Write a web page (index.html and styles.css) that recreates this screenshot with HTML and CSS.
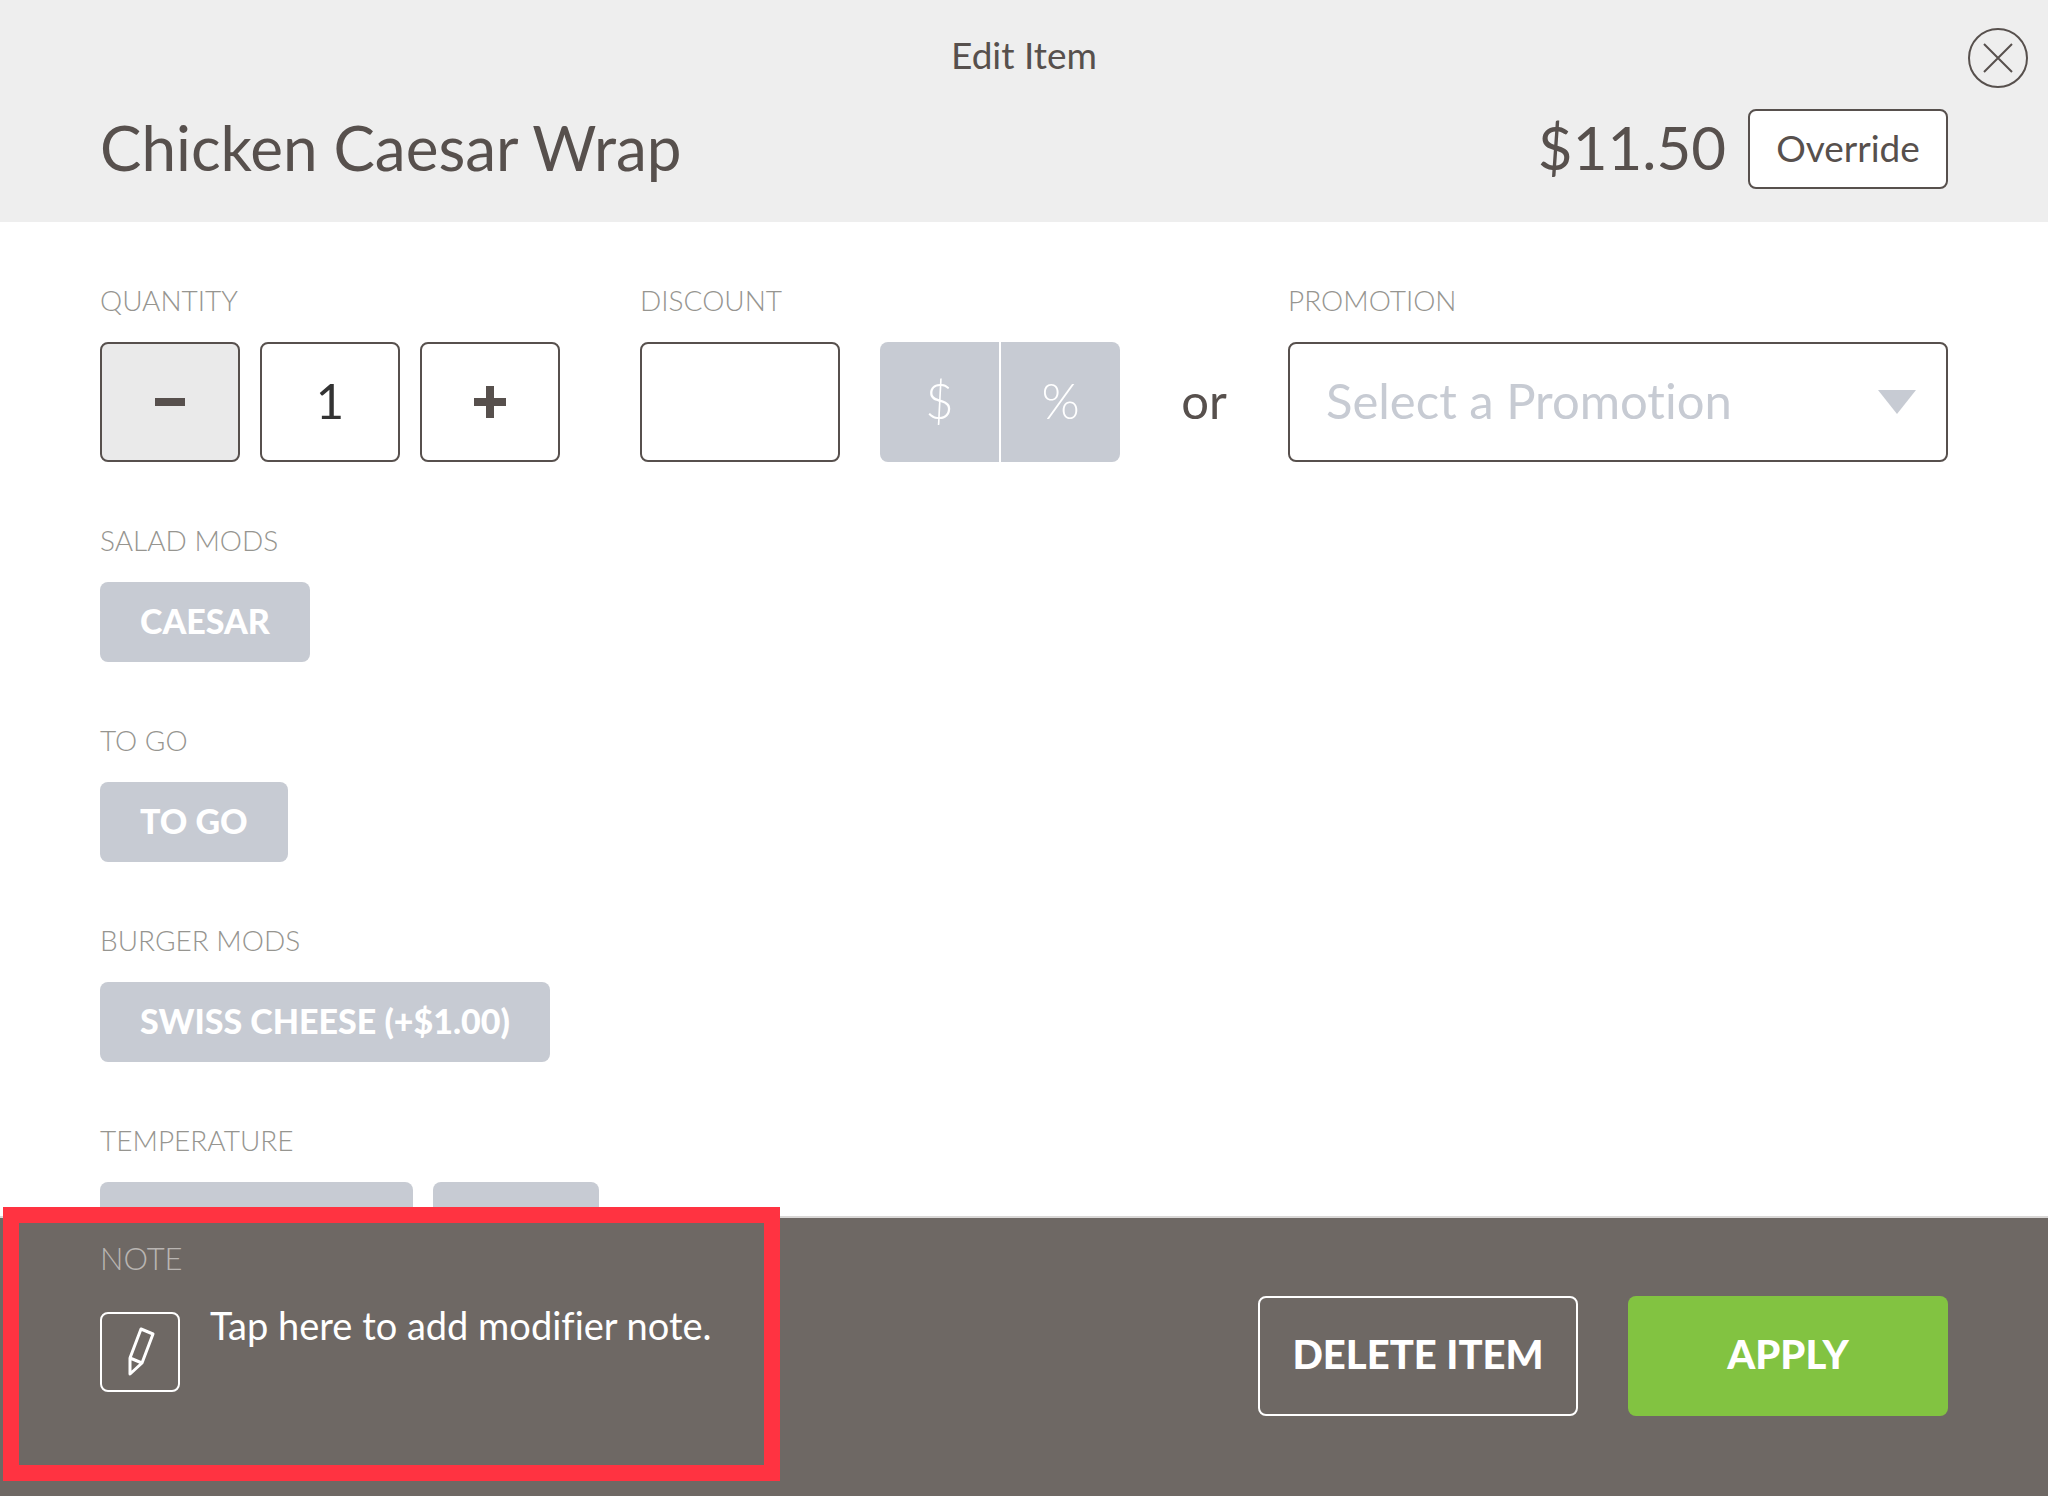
FILE: index.html
```html
<!DOCTYPE html>
<html lang="en">
<head>
    <meta charset="UTF-8">
    <meta name="viewport" content="width=device-width, initial-scale=1.0">
    <title>Edit Item</title>
    <link rel="stylesheet" href="styles.css">
</head>
<body>
    <header class="header">
        <h1 class="screen-title">Edit Item</h1>
        <button type="button" class="close" aria-label="Close">
            <svg viewBox="0 0 60 60" width="60" height="60">
                <circle cx="30" cy="30" r="29"/>
                <path d="M16 16L44 44M44 16L16 44"/>
            </svg>
        </button>
        <div class="item-row">
            <h2 class="item-name">Chicken Caesar Wrap</h2>
            <span class="price">$11.50</span>
            <button type="button" class="override">Override</button>
        </div>
    </header>

    <main class="content">
        <div class="fields">
            <div class="field">
                <label class="label" for="quantity">QUANTITY</label>
                <div class="stepper">
                    <button type="button" class="step step-off" aria-label="Decrease">
                        <svg viewBox="0 0 32 32" width="32" height="32"><path d="M1 16H31"/></svg>
                    </button>
                    <input type="text" id="quantity" class="box quantity" value="1">
                    <button type="button" class="step" aria-label="Increase">
                        <svg viewBox="0 0 32 32" width="32" height="32"><path d="M0 16H32M16 0V32"/></svg>
                    </button>
                </div>
            </div>

            <div class="field discount">
                <label class="label" for="discount">DISCOUNT</label>
                <div class="discount-row">
                    <input type="text" id="discount" class="box discount-input">
                    <div class="units">
                        <button type="button" class="unit">$</button>
                        <button type="button" class="unit">%</button>
                    </div>
                </div>
            </div>

            <span class="or">or</span>

            <div class="field promotion">
                <label class="label" for="promotion">PROMOTION</label>
                <div class="select-wrap">
                    <select id="promotion" class="box">
                        <option>Select a Promotion</option>
                    </select>
                    <svg class="caret" viewBox="0 0 38 24" width="38" height="24"><path d="M0 0H38L19 24Z"/></svg>
                </div>
            </div>
        </div>

        <section class="mods">
            <h3 class="label">SALAD MODS</h3>
            <div class="mod-list">
                <button type="button" class="mod">CAESAR</button>
            </div>
        </section>

        <section class="mods">
            <h3 class="label">TO GO</h3>
            <div class="mod-list">
                <button type="button" class="mod">TO GO</button>
            </div>
        </section>

        <section class="mods">
            <h3 class="label">BURGER MODS</h3>
            <div class="mod-list">
                <button type="button" class="mod">SWISS CHEESE (+$1.00)</button>
            </div>
        </section>

        <section class="mods">
            <h3 class="label">TEMPERATURE</h3>
            <div class="mod-list">
                <button type="button" class="mod mod-wide" aria-label="Temperature option 1"></button>
                <button type="button" class="mod mod-narrow" aria-label="Temperature option 2"></button>
            </div>
        </section>
    </main>

    <footer class="footer">
        <div class="note">
            <h3 class="note-label">NOTE</h3>
            <div class="note-row">
                <button type="button" class="note-edit" aria-label="Edit note">
                    <svg viewBox="0 0 80 80" width="80" height="80">
                        <path d="M41 17L53 22L42 51L30 46ZM30 46L30 62L42 51"/>
                    </svg>
                </button>
                <p class="note-text">Tap here to add modifier note.</p>
            </div>
        </div>
        <div class="actions">
            <button type="button" class="action delete">DELETE ITEM</button>
            <button type="button" class="action apply">APPLY</button>
        </div>
        <div class="highlight"></div>
    </footer>
</body>
</html>
```
FILE: styles.css
```css
* {
    box-sizing: border-box;
}
body {
    margin: 0;
    height: 100vh;
    display: flex;
    flex-direction: column;
    overflow: hidden;
    background: #fff;
    color: #57504d;
    font-family: Lato, "Open Sans", sans-serif;
    font-variant-ligatures: none;
}
h1, h2, h3, p {
    margin: 0;
    font-weight: inherit;
}
button, input, select {
    font: inherit;
    color: inherit;
    padding: 0;
    margin: 0;
    border: none;
    background: none;
}
button {
    cursor: pointer;
}
svg {
    display: block;
    fill: none;
    stroke: currentColor;
}

/* header */
.header {
    position: relative;
    flex: none;
    padding: 31px 100px 33px;
    background: #eee;
}
.screen-title {
    font-size: 37px;
    line-height: 48px;
    text-align: center;
}
.close {
    position: absolute;
    top: 28px;
    right: 20px;
}
.close svg {
    stroke-width: 2;
}
.item-row {
    display: flex;
    align-items: center;
    margin-top: 30px;
}
.item-name, .price {
    line-height: 76px;
    padding-bottom: 4px;
}
.item-name {
    flex: 1;
    font-size: 62px;
}
.price {
    margin-right: 22px;
    font-size: 60px;
}
.override {
    width: 200px;
    height: 80px;
    padding-bottom: 4px;
    border: 2px solid #57504d;
    border-radius: 8px;
    background: #fff;
    font-size: 37px;
}

/* form */
.content {
    flex: 1;
    min-height: 0;
    overflow: hidden;
    display: flex;
    flex-direction: column;
    gap: 58px;
    padding: 58px 100px 0;
}
.label {
    display: block;
    margin-bottom: 22px;
    font-size: 28px;
    line-height: 40px;
    font-weight: 300;
    color: #969590;
}
.fields {
    display: flex;
    align-items: flex-end;
}
.stepper {
    display: flex;
    gap: 20px;
}
.box, .step {
    height: 120px;
    border: 2px solid #57504d;
    border-radius: 8px;
    background: #fff;
    font-size: 49px;
}
.box, .unit {
    padding-bottom: 4px;
}
.step {
    width: 140px;
    display: flex;
    align-items: center;
    justify-content: center;
}
.step svg {
    stroke-width: 8;
}
.step-off {
    background: #eaeaea;
}
.quantity {
    width: 140px;
    text-align: center;
    color: #333;
}
.discount {
    margin-left: 80px;
}
.discount-row {
    display: flex;
    gap: 40px;
}
.discount-input {
    width: 200px;
    padding: 0 20px;
}
.units {
    display: flex;
    gap: 2px;
    width: 240px;
    border-radius: 8px;
    overflow: hidden;
}
.unit {
    flex: 1;
    background: #c7cbd3;
    color: #fff;
    font-size: 49px;
    font-weight: 300;
}
.or {
    width: 168px;
    text-align: center;
    font-size: 49px;
    line-height: 116px;
    padding-bottom: 4px;
}
.promotion {
    flex: 1;
}
.select-wrap {
    position: relative;
}
.select-wrap select {
    width: 100%;
    padding: 0 36px 4px;
    appearance: none;
    color: #c7cbd3;
}
.caret {
    position: absolute;
    top: 48px;
    right: 32px;
    fill: #c7cbd3;
    stroke: none;
    pointer-events: none;
}
.mod-list {
    display: flex;
    gap: 20px;
}
.mod {
    height: 80px;
    padding: 0 40px 4px;
    border-radius: 8px;
    background: #c7cbd3;
    color: #fff;
    font-size: 34px;
    font-weight: 900;
}
.mod-wide {
    width: 313px;
}
.mod-narrow {
    width: 166px;
}

/* footer */
.footer {
    position: relative;
    flex: none;
    display: flex;
    align-items: center;
    justify-content: space-between;
    min-height: 280px;
    padding: 0 100px 2px;
    border-top: 2px solid #d9d7d6;
    background: #6e6864;
    color: #fff;
}
.note {
    align-self: flex-start;
    padding-top: 20px;
}
.note-label {
    font-size: 31px;
    line-height: 40px;
    font-weight: 300;
    color: #b9b5b2;
}
.note-row {
    display: flex;
    gap: 30px;
    margin-top: 34px;
}
.note-edit {
    width: 80px;
    height: 80px;
    border: 2px solid #fff;
    border-radius: 8px;
}
.note-edit svg {
    margin: -2px;
    stroke-width: 3;
    stroke-linejoin: round;
}
.note-text {
    font-size: 38px;
    line-height: 26px;
}
.actions {
    display: flex;
    gap: 50px;
}
.action {
    width: 320px;
    height: 120px;
    padding-bottom: 4px;
    border-radius: 8px;
    font-size: 40px;
    font-weight: 900;
}
.delete {
    border: 2px solid #fff;
}
.apply {
    background: #82c341;
}
.highlight {
    position: absolute;
    top: -11px;
    left: 3px;
    width: 777px;
    height: 274px;
    border: 16px solid #ff3341;
    pointer-events: none;
}
```
